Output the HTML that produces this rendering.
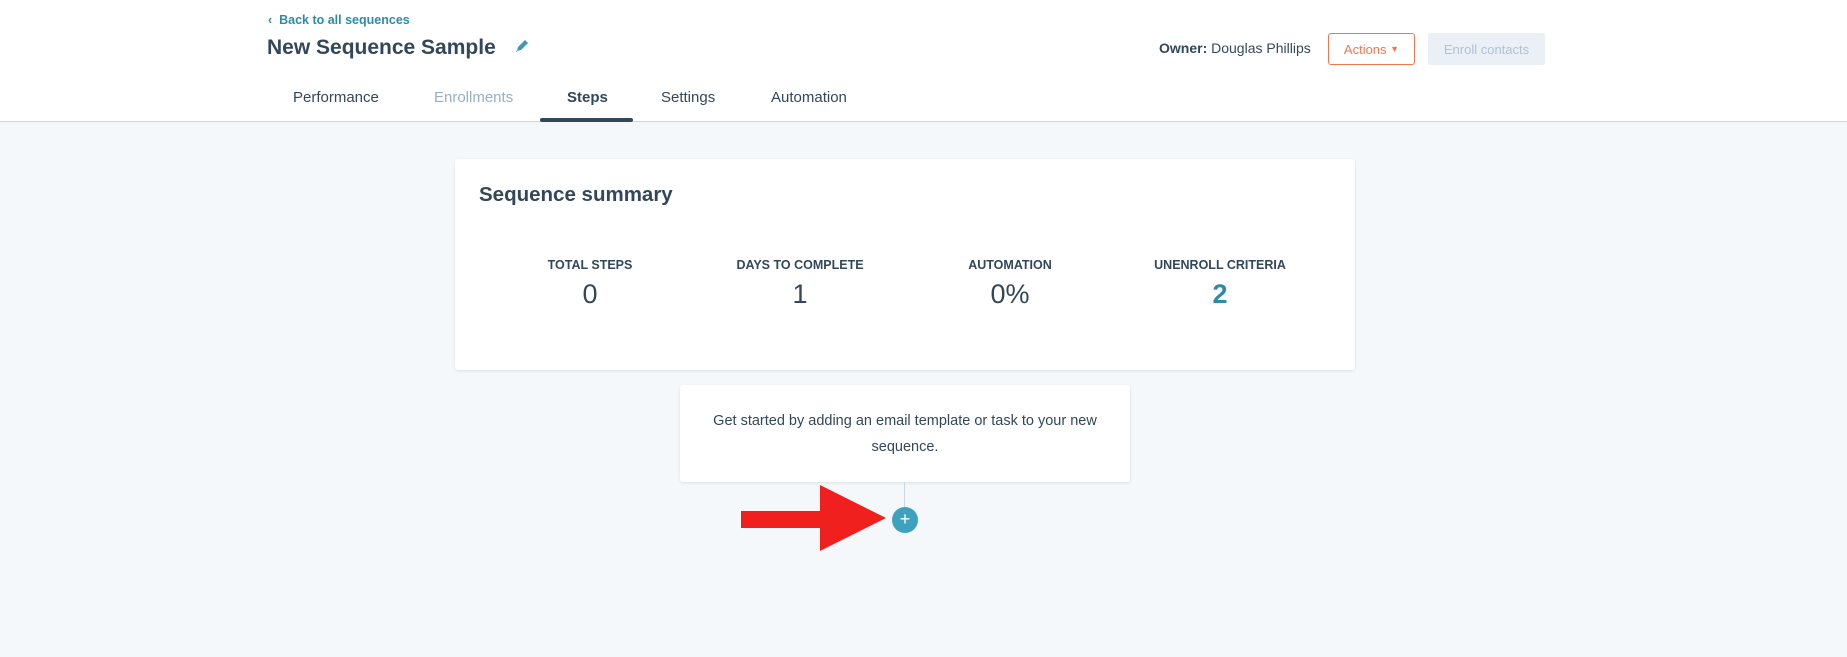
<!DOCTYPE html>
<html><head><meta charset="utf-8"><style>
*{margin:0;padding:0;box-sizing:border-box}
body{width:1847px;height:657px;background:#f5f8fa;font-family:"Liberation Sans",sans-serif;color:#33475b;position:relative;overflow:hidden}
.hdr{position:absolute;left:0;top:0;width:1847px;height:122px;background:#fff;border-bottom:1px solid #cbd6e2}
.a{position:absolute;white-space:nowrap}
.back{left:268px;top:13px;font-size:12.5px;font-weight:bold;color:#2e8ba8}
.title{left:267px;top:36px;font-size:21px;font-weight:bold;color:#33475b}
.tab{top:89px;font-size:15px;color:#33475b}
.ul{left:540px;top:118px;width:93px;height:4px;background:#33475b;border-radius:2px}
.btn{position:absolute;top:33px;height:32px;border-radius:3px;font-size:13px;display:flex;align-items:center;justify-content:center}
.card{position:absolute;background:#fff;border-radius:3px;box-shadow:0 1px 3px rgba(45,62,80,.12)}
.lbl{position:absolute;top:258px;width:240px;text-align:center;font-size:12.5px;font-weight:bold;color:#33475b}
.val{position:absolute;top:279px;width:240px;text-align:center;font-size:27px;color:#33475b}
</style></head><body>
<div class="hdr">
<div class="a back">‹&nbsp;&nbsp;Back to all sequences</div>
<div class="a title">New Sequence Sample</div>
<svg class="a" style="left:514px;top:38px" width="16" height="16" viewBox="0 0 16 16"><path d="M3 13l1-4 7-7 3 3-7 7z" fill="#3a9ab5"/><path d="M2 14l1.5-.5-1-1z" fill="#3a9ab5"/></svg>
<div class="a tab" style="left:293px">Performance</div>
<div class="a tab" style="left:434px;color:#99afc4">Enrollments</div>
<div class="a tab" style="left:567px;font-weight:bold">Steps</div>
<div class="a tab" style="left:661px">Settings</div>
<div class="a tab" style="left:771px">Automation</div>
<div class="a ul"></div>
<div class="a" style="left:1159px;top:40px;font-size:14px"><b>Owner:</b> Douglas Phillips</div>
<div class="btn" style="left:1328px;width:87px;border:1px solid #f2754e;color:#f2754e">Actions&nbsp;<span style="font-size:9px">▼</span></div>
<div class="btn" style="left:1428px;width:117px;background:#eaf0f6;color:#b0c1d4">Enroll contacts</div>
</div>
<div class="card" style="left:455px;top:159px;width:900px;height:211px"></div>
<div class="a" style="left:479px;top:183px;font-size:20.5px;font-weight:bold">Sequence summary</div>
<div class="lbl" style="left:470px">TOTAL STEPS</div><div class="val" style="left:470px">0</div>
<div class="lbl" style="left:680px">DAYS TO COMPLETE</div><div class="val" style="left:680px">1</div>
<div class="lbl" style="left:890px">AUTOMATION</div><div class="val" style="left:890px">0%</div>
<div class="lbl" style="left:1100px">UNENROLL CRITERIA</div><div class="val" style="left:1100px;color:#2e8ba8;font-weight:bold">2</div>
<div class="card" style="left:680px;top:385px;width:450px;height:97px"></div>
<div class="a" style="left:680px;top:408px;width:450px;text-align:center;white-space:normal;font-size:14.5px;line-height:26px;padding:0 20px">Get started by adding an email template or task to your new sequence.</div>
<div class="a" style="left:904px;top:482px;width:1px;height:26px;background:#cbd6e2"></div>
<div class="a" style="left:892px;top:507px;width:26px;height:26px;border-radius:50%;background:#3fa2bd;color:#fff;font-size:18px;line-height:25px;text-align:center">+</div>
<svg class="a" style="left:740px;top:484px" width="150" height="70"><path d="M1 27H80V1L146 34L80 67V44H1Z" fill="#f0201f"/></svg>
</body></html>
